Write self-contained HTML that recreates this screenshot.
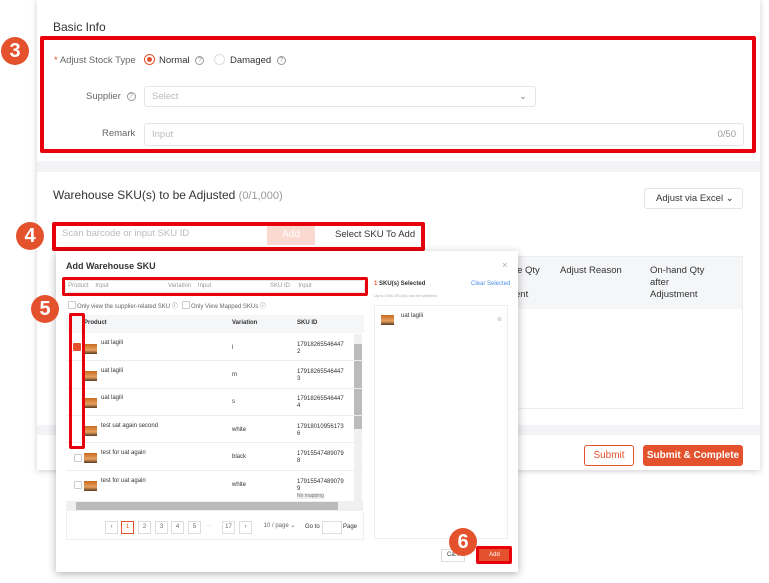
<!DOCTYPE html><html><head><style>
*{box-sizing:border-box;margin:0;padding:0}
body{width:769px;height:583px;position:relative;overflow:hidden;background:#fff;font-family:"Liberation Sans",sans-serif;color:#333}
.a{position:absolute}
.card{left:37px;top:0;width:723px;height:470px;background:#fff;box-shadow:0 1px 6px rgba(0,0,0,.2)}
.red{position:absolute;border:4px solid #e8000b;border-radius:2px}
.badge{position:absolute;width:28px;height:28px;border-radius:50%;background:#e3522d;color:#fff;font-weight:bold;font-size:20px;text-align:center;line-height:28px}
.inp{position:absolute;border:1px solid #e5e5e5;border-radius:3px;background:#fff;font-size:9.5px;color:#bbb;padding-left:7px}
.t{position:absolute;font-size:9.5px;white-space:nowrap}
.q{display:inline-block;width:9px;height:9px;border:1px solid #999;border-radius:50%;font-size:7px;line-height:7px;text-align:center;color:#999;vertical-align:middle;margin-left:3px}
.thumb{position:absolute;width:13px;height:10px;background:linear-gradient(#c86a1f,#e8a060 60%,#5a3a20);}
.cb{position:absolute;width:8px;height:8px;border:1px solid #ccc;border-radius:1px;background:#fff}
.row{position:absolute;left:66px;width:297px;height:1px;background:#eee}
.pg{position:absolute;top:521px;width:13px;height:13px;border:1px solid #ddd;font-size:6px;text-align:center;line-height:11px;color:#666}
</style></head><body>
<div class="a card"></div>
<div class="a" style="left:37px;top:161px;width:723px;height:11px;background:#f3f3f5"></div>
<div class="a" style="left:37px;top:425px;width:723px;height:10px;background:#f3f3f5"></div>
<div class="t" style="left:53px;top:20px;font-size:12px;color:#333">Basic Info</div>
<div class="t" style="left:54px;top:55px;color:#666"><span style="color:#e3522d">*</span> Adjust Stock Type</div>
<div class="a" style="left:144px;top:54px;width:11px;height:11px;border:1px solid #e3522d;border-radius:50%"><div class="a" style="left:2px;top:2px;width:5px;height:5px;border-radius:50%;background:#e3522d"></div></div>
<div class="t" style="left:159px;top:55px">Normal <span class="q">?</span></div>
<div class="a" style="left:214px;top:54px;width:11px;height:11px;border:1px solid #ddd;border-radius:50%"></div>
<div class="t" style="left:230px;top:55px">Damaged <span class="q">?</span></div>
<div class="t" style="left:86px;top:91px;color:#666">Supplier <span class="q">?</span></div>
<div class="inp" style="left:144px;top:86px;width:392px;height:21px;line-height:19px">Select<span style="position:absolute;right:8px;color:#888">⌄</span></div>
<div class="t" style="left:102px;top:128px;color:#666">Remark</div>
<div class="inp" style="left:144px;top:123px;width:600px;height:23px;line-height:21px">Input<span style="position:absolute;right:7px;color:#999">0/50</span></div>
<div class="red" style="left:40px;top:36px;width:716px;height:117px"></div>
<div class="badge" style="left:1px;top:37px">3</div>
<div class="t" style="left:53px;top:188px;font-size:12px">Warehouse SKU(s) to be Adjusted <span style="color:#999;font-size:11px">(0/1,000)</span></div>
<div class="inp" style="left:644px;top:188px;width:99px;height:21px;line-height:19px;color:#333;padding-left:11px">Adjust via Excel ⌄</div>
<div class="inp" style="left:55px;top:225px;width:212px;height:20px;line-height:18px;border:none">Scan barcode or input SKU ID</div>
<div class="a" style="left:267px;top:225px;width:48px;height:20px;background:#fbd9d0;color:#fff;font-size:10px;text-align:center;line-height:20px">Add</div>
<div class="t" style="left:335px;top:229px;color:#333">Select SKU To Add</div>
<div class="red" style="left:52px;top:222px;width:373px;height:29px"></div>
<div class="badge" style="left:16px;top:222px">4</div>
<div class="a" style="left:370px;top:256px;width:373px;height:153px;border:1px solid #eee;background:#fff"><div style="height:52px;background:#f5f6f8"></div></div>
<div class="t" style="left:515px;top:265px">le Qty</div><div class="t" style="left:515px;top:289px">ent</div>
<div class="t" style="left:560px;top:265px">Adjust Reason</div>
<div class="t" style="left:650px;top:265px;line-height:12px">On-hand Qty<br>after<br>Adjustment</div>
<div class="a" style="left:584px;top:445px;width:50px;height:21px;border:1px solid #e3522d;border-radius:3px;color:#e3522d;font-size:10px;text-align:center;line-height:19px">Submit</div>
<div class="a" style="left:643px;top:445px;width:100px;height:21px;background:#e3522d;border-radius:3px;color:#fff;font-size:10px;font-weight:bold;text-align:center;line-height:21px">Submit &amp; Complete</div>
<!-- modal -->
<div class="a" style="left:56px;top:251px;width:462px;height:321px;background:#fff;box-shadow:0 2px 8px rgba(0,0,0,.3)"></div>
<div class="t" style="left:66px;top:261px;font-size:9px;font-weight:bold;color:#333">Add Warehouse SKU</div>
<div class="t" style="left:502px;top:260px;color:#aaa">×</div>
<div class="inp" style="left:65px;top:280px;width:300px;height:13px;font-size:6px;line-height:11px;padding-left:2px;color:#999">Product&nbsp;&nbsp;&nbsp;&nbsp;Input<span style="position:absolute;left:102px">Variation&nbsp;&nbsp;&nbsp;&nbsp;Input</span><span style="position:absolute;left:204px">SKU ID&nbsp;&nbsp;&nbsp;&nbsp;&nbsp;Input</span></div>
<div class="red" style="left:62px;top:277px;width:306px;height:19px;border-width:3px"></div>
<div class="cb" style="left:68px;top:301px"></div><div class="t" style="left:77px;top:301px;font-size:6px;color:#666">Only view the supplier-related SKU ⓘ</div>
<div class="cb" style="left:182px;top:301px"></div><div class="t" style="left:191px;top:301px;font-size:6px;color:#666">Only View Mapped SKUs ⓘ</div>
<div class="a" style="left:66px;top:315px;width:298px;height:18px;background:#f5f6f8"></div>
<div class="t" style="left:84px;top:320px;font-size:6px;font-weight:bold">Product</div>
<div class="t" style="left:232px;top:320px;font-size:6px;font-weight:bold">Variation</div>
<div class="t" style="left:297px;top:320px;font-size:6px;font-weight:bold">SKU ID</div>
<div class="a" style="left:354px;top:334px;width:8px;height:168px;background:#f0f0f0"><div style="margin-top:10px;height:85px;background:#bbb"></div></div>
<div class="a" style="left:66px;top:501px;width:297px;height:10px;background:#f0f0f0"><div style="margin-left:10px;width:262px;height:8px;margin-top:1px;background:#bbb"></div></div>
<div class="thumb" style="left:84px;top:344px"></div><div class="t" style="left:101px;top:340px;font-size:6px">uat lagili</div><div class="t" style="left:232px;top:345px;font-size:6px">l</div><div class="t" style="left:297px;top:342px;font-size:6px;line-height:7px">17918265546447<br>2</div>
<div class="row" style="top:360px"></div>
<div class="thumb" style="left:84px;top:371px"></div><div class="t" style="left:101px;top:368px;font-size:6px">uat lagili</div><div class="t" style="left:232px;top:372px;font-size:6px">m</div><div class="t" style="left:297px;top:369px;font-size:6px;line-height:7px">17918265546447<br>3</div>
<div class="row" style="top:388px"></div>
<div class="thumb" style="left:84px;top:398px"></div><div class="t" style="left:101px;top:395px;font-size:6px">uat lagili</div><div class="t" style="left:232px;top:399px;font-size:6px">s</div><div class="t" style="left:297px;top:396px;font-size:6px;line-height:7px">17918265546447<br>4</div>
<div class="row" style="top:415px"></div>
<div class="thumb" style="left:84px;top:426px"></div><div class="t" style="left:101px;top:423px;font-size:6px">test uat again second</div><div class="t" style="left:232px;top:427px;font-size:6px">white</div><div class="t" style="left:297px;top:424px;font-size:6px;line-height:7px">17918010956173<br>6</div>
<div class="row" style="top:442px"></div>
<div class="cb" style="left:74px;top:454px"></div><div class="thumb" style="left:84px;top:453px"></div><div class="t" style="left:101px;top:450px;font-size:6px">test for uat again</div><div class="t" style="left:232px;top:454px;font-size:6px">black</div><div class="t" style="left:297px;top:451px;font-size:6px;line-height:7px">17915547489079<br>8</div>
<div class="row" style="top:470px"></div>
<div class="cb" style="left:74px;top:481px"></div><div class="thumb" style="left:84px;top:481px"></div><div class="t" style="left:101px;top:478px;font-size:6px">test for uat again</div><div class="t" style="left:232px;top:482px;font-size:6px">white</div><div class="t" style="left:297px;top:479px;font-size:6px;line-height:7px">17915547489079<br>9</div>
<div class="t" style="left:297px;top:493px;font-size:5px;background:#eee;color:#777">No mapping</div>
<div class="cb" style="left:73px;top:343px;background:#e3522d;border-color:#e3522d"></div>
<div class="red" style="left:69px;top:313px;width:16px;height:136px;border-width:3px"></div>
<div class="badge" style="left:31px;top:295px">5</div>
<div class="a" style="left:66px;top:512px;width:298px;height:28px;border:1px solid #eee;border-top:none"></div>
<div class="pg" style="left:105px">‹</div><div class="pg" style="left:121px;border-color:#e3522d;color:#e3522d">1</div><div class="pg" style="left:138px">2</div><div class="pg" style="left:155px">3</div><div class="pg" style="left:171px">4</div><div class="pg" style="left:188px">5</div><div class="t" style="left:206px;top:523px;font-size:6px;color:#bbb">···</div><div class="pg" style="left:222px">17</div><div class="pg" style="left:239px">›</div>
<div class="pg" style="left:259px;width:41px;border:none">10 / page ⌄</div><div class="t" style="left:305px;top:524px;font-size:6px">Go to</div><div class="pg" style="left:322px;width:20px"></div><div class="t" style="left:343px;top:524px;font-size:6px">Page</div>
<div class="t" style="left:374px;top:281px;font-size:6px;font-weight:bold"><span style="color:#e3522d">1</span> SKU(s) Selected</div>
<div class="t" style="left:471px;top:281px;font-size:6px;color:#4a90e2">Clear Selected</div>
<div class="t" style="left:374px;top:293px;font-size:4px;color:#aaa">Up to 1000 SKU(s) can be selected.</div>
<div class="a" style="left:374px;top:305px;width:134px;height:234px;border:1px solid #eee"></div>
<div class="thumb" style="left:381px;top:315px"></div><div class="t" style="left:401px;top:313px;font-size:6px">uat lagili</div><div class="t" style="left:497px;top:316px;font-size:6px;color:#bbb">⊗</div>
<div class="a" style="left:441px;top:549px;width:24px;height:13px;border:1px solid #ddd;font-size:6px;line-height:11px;padding-left:5px">Ca...</div>
<div class="a" style="left:478px;top:548px;width:33px;height:14px;background:#e3522d;color:#fff;font-size:6px;text-align:center;line-height:14px">Add</div>
<div class="red" style="left:476px;top:546px;width:36px;height:18px;border-width:3px"></div>
<div class="badge" style="left:449px;top:528px">6</div>
</body></html>
